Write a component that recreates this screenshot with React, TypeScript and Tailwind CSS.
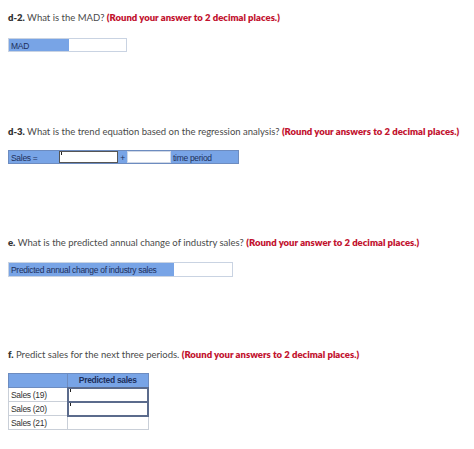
import React from 'react';

const title = "text-[9.5px] leading-[12px] text-[#4a4a4a] font-['Lato',sans-serif]";
const hint = 'font-extrabold text-[#c2132f]';
const label =
  "bg-[#78a4e6] text-[#1d2f5c] text-[8.5px] tracking-[-0.3px] leading-[14px] font-['Liberation_Sans',Arial,sans-serif] px-[2px] whitespace-nowrap";

function Mark() {
  return <span className="absolute left-[1px] top-[0px] w-[1px] h-[3px] bg-[#222]" />;
}

function Question({ tag, text, note }: { tag: string; text: string; note: string }) {
  return (
    <p className={title}>
      <span className="font-extrabold text-[#333]">{tag}</span> {text} <span className={hint}>{note}</span>
    </p>
  );
}

export default function App() {
  return (
    <div className="w-[474px] h-[449px] bg-white px-[8px] pt-[12px]">
      <Question tag="d-2." text="What is the MAD?" note="(Round your answer to 2 decimal places.)" />
      <div className="mt-[14px] flex w-[119px] h-[14px] border border-[#c9d3e2]">
        <div className={label + ' w-[60px]'}>MAD</div>
        <div className="flex-1 bg-white" />
      </div>

      <div className="mt-[74px]">
        <Question
          tag="d-3."
          text="What is the trend equation based on the regression analysis?"
          note="(Round your answers to 2 decimal places.)"
        />
      </div>
      <div className="mt-[12px] flex w-[231px] h-[14px] bg-[#78a4e6] border border-[#6d8cc0]">
        <div className={label + ' w-[50px]'}>Sales =</div>
        <div className="relative w-[59px] bg-white border border-[#555]">
          <Mark />
        </div>
        <div className={label + ' w-[9px] text-center px-0'}>+</div>
        <div className="w-[44px] bg-white border border-[#d0d8e6]" />
        <div className={label + ' flex-1'}>time period</div>
      </div>

      <div className="mt-[73px]">
        <Question
          tag="e."
          text="What is the predicted annual change of industry sales?"
          note="(Round your answer to 2 decimal places.)"
        />
      </div>
      <div className="mt-[13px] flex w-[225px] h-[15px] border border-[#c9d3e2]">
        <div className={label + ' w-[165px]'}>Predicted annual change of industry sales</div>
        <div className="flex-1 bg-white" />
      </div>

      <div className="mt-[72px]">
        <Question tag="f." text="Predict sales for the next three periods." note="(Round your answers to 2 decimal places.)" />
      </div>
      <table className="mt-[12px] w-[141px] border-collapse font-['Liberation_Sans',Arial,sans-serif] text-[8.5px] tracking-[-0.3px] text-[#333]">
        <thead>
          <tr className="h-[14px] bg-[#78a4e6]">
            <th className="w-[59px] border border-[#6d8cc0]" />
            <th className="border border-[#6d8cc0] font-bold text-[#1d2f5c]">Predicted sales</th>
          </tr>
        </thead>
        <tbody>
          {['Sales (19)', 'Sales (20)', 'Sales (21)'].map((row, i) => (
            <tr key={row} className="h-[14px]">
              <td className="border border-[#c9cfd8] px-[2px] leading-[12px]">{row}</td>
              <td
                className={
                  i < 2
                    ? 'relative border-2 border-[#5b6b8c] p-0'
                    : 'border border-[#c9cfd8] p-0'
                }
              >
                {i < 2 && <Mark />}
              </td>
            </tr>
          ))}
        </tbody>
      </table>
    </div>
  );
}
